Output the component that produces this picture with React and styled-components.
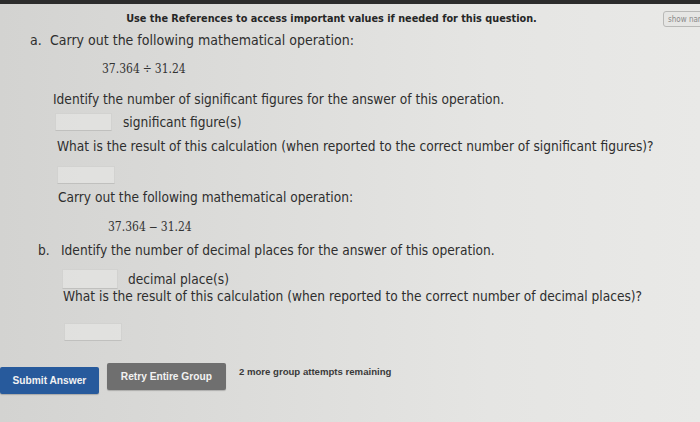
import React from 'react'
import styled, { createGlobalStyle } from 'styled-components'

const GlobalStyle = createGlobalStyle`
  html, body {
    margin: 0;
    padding: 0;
  }
  body {
    width: 700px;
    height: 422px;
    overflow: hidden;
    background: linear-gradient(90deg, #d3d3d1 0%, #dcdcda 35%, #e5e5e3 70%, #e9e9e7 100%);
    font-family: "DejaVu Sans Condensed", "DejaVu Sans", sans-serif;
    color: #2e2e2e;
  }
`

const TopBar = styled.div`
  height: 4px;
  background: #2c2c2c;
`

const HeaderRow = styled.div`
  display: grid;
  grid-template-columns: 1fr auto;
  align-items: center;
  height: 24px;
  margin-top: 2px;
`

const Notice = styled.div`
  text-align: center;
  font-weight: bold;
  font-size: 10.8px;
  color: #262626;
`

// cut off by the right edge in the shot ("show nar")
const ShowButton = styled.button`
  width: 40px;
  height: 16px;
  margin-top: 2px;
  margin-right: -3px;
  padding: 0 0 0 4px;
  border: 1px solid #b9b9b7;
  border-radius: 3px;
  background: #e6e6e4;
  color: #8a8a8a;
  font-family: "DejaVu Sans Condensed", sans-serif;
  font-size: 8px;
  text-align: left;
  overflow: hidden;
  white-space: nowrap;
`

const Line = styled.div`
  display: flex;
  align-items: center;
  padding-left: ${({ indent }) => indent}px;
  margin-top: ${({ top }) => top || 0}px;
  height: ${({ h }) => h || 18}px;
  font-size: ${({ size }) => size || 13.6}px;
  white-space: nowrap;
`

const PartLabel = styled.span`
  display: inline-block;
  width: ${({ w }) => w}px;
`

const MathExpr = styled.div`
  padding-left: ${({ indent }) => indent}px;
  margin-top: ${({ top }) => top}px;
  height: 16px;
  display: flex;
  align-items: center;
  font-family: "DejaVu Serif Condensed", "DejaVu Serif", serif;
  font-size: 12px;
  color: #333;
`

const Op = styled.span`
  margin: 0 3px;
`

const AnswerBox = styled.div`
  width: ${({ w }) => w || 57}px;
  height: ${({ h }) => h || 18}px;
  margin-right: ${({ gap }) => gap || 11}px;
  box-sizing: border-box;
  border: 1px solid #d2d2d0;
  border-bottom: 1px solid #c0c0be;
  background: rgba(235, 235, 233, 0.5);
`

const ButtonRow = styled.div`
  display: flex;
  align-items: flex-start;
  margin-top: ${({ top }) => top}px;
`

const Button = styled.button`
  height: 27px;
  padding: 0 ${({ pad }) => pad}px;
  margin-top: ${({ drop }) => drop || 0}px;
  margin-right: ${({ gap }) => gap}px;
  border: none;
  border-radius: 2px;
  background: ${({ tone }) => tone};
  color: #f2f2f2;
  font-family: "Liberation Sans", Arial, sans-serif;
  font-weight: bold;
  font-size: 10.2px;
  box-shadow: 0 1px 1px rgba(0, 0, 0, 0.2);
`

const Remaining = styled.span`
  margin-top: 3px;
  font-family: "Liberation Sans", Arial, sans-serif;
  font-weight: bold;
  font-size: 9.6px;
  color: #3a3a3a;
`

export default function App() {
  return (
    <>
      <GlobalStyle />
      <TopBar />
      <HeaderRow>
        <Notice>Use the References to access important values if needed for this question.</Notice>
        <ShowButton>show names</ShowButton>
      </HeaderRow>

      <Line indent={30} top={0} h={20} size={14}>
        <PartLabel w={20}>a.</PartLabel>Carry out the following mathematical operation:
      </Line>
      <MathExpr indent={102} top={11}>
        37.364<Op>÷</Op>31.24
      </MathExpr>

      <Line indent={53} top={13}>Identify the number of significant figures for the answer of this operation.</Line>
      <Line indent={55} top={5} h={18}>
        <AnswerBox />significant figure(s)
      </Line>
      <Line indent={57} top={6}>What is the result of this calculation (when reported to the correct number of significant figures)?</Line>
      <Line indent={57} top={11} h={18}>
        <AnswerBox w={58} />
      </Line>

      <Line indent={58} top={4}>Carry out the following mathematical operation:</Line>
      <MathExpr indent={108} top={13}>
        37.364<Op>−</Op>31.24
      </MathExpr>

      <Line indent={38} top={6}>
        <PartLabel w={23}>b.</PartLabel>Identify the number of decimal places for the answer of this operation.
      </Line>
      <Line indent={62} top={10} h={20}>
        <AnswerBox w={56} h={20} gap={10} />decimal place(s)
      </Line>
      <Line indent={63} top={-2}>What is the result of this calculation (when reported to the correct number of decimal places)?</Line>
      <Line indent={64} top={18} h={18}>
        <AnswerBox w={58} />
      </Line>

      <ButtonRow top={22}>
        <Button tone="#275a9c" pad={12.5} gap={8} drop={4}>Submit Answer</Button>
        <Button tone="#6f6f6f" pad={14} gap={13}>Retry Entire Group</Button>
        <Remaining>2 more group attempts remaining</Remaining>
      </ButtonRow>
    </>
  )
}
